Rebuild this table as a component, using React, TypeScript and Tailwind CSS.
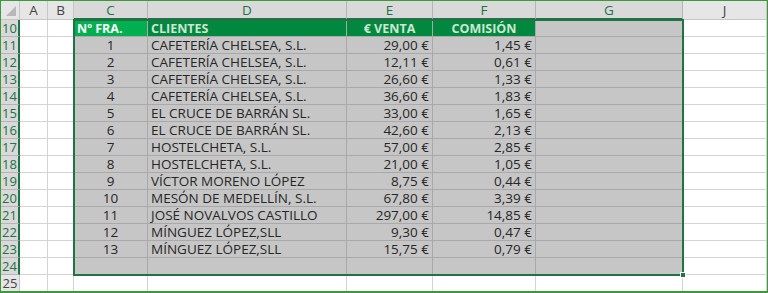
import { Fragment } from "react";

const COLS = ["A", "B", "C", "D", "E", "F", "G", "J"];
const SEL_COLS = ["C", "D", "E", "F", "G"];

const ROWS: [number, string, string, string][] = [
  [1, "CAFETERÍA CHELSEA, S.L.", "29,00 €", "1,45 €"],
  [2, "CAFETERÍA CHELSEA, S.L.", "12,11 €", "0,61 €"],
  [3, "CAFETERÍA CHELSEA, S.L.", "26,60 €", "1,33 €"],
  [4, "CAFETERÍA CHELSEA, S.L.", "36,60 €", "1,83 €"],
  [5, "EL CRUCE DE BARRÁN SL.", "33,00 €", "1,65 €"],
  [6, "EL CRUCE DE BARRÁN SL.", "42,60 €", "2,13 €"],
  [7, "HOSTELCHETA, S.L.", "57,00 €", "2,85 €"],
  [8, "HOSTELCHETA, S.L.", "21,00 €", "1,05 €"],
  [9, "VÍCTOR MORENO LÓPEZ", "8,75 €", "0,44 €"],
  [10, "MESÓN DE MEDELLÍN, S.L.", "67,80 €", "3,39 €"],
  [11, "JOSÉ NOVALVOS CASTILLO", "297,00 €", "14,85 €"],
  [12, "MÍNGUEZ LÓPEZ,SLL", "9,30 €", "0,47 €"],
  [13, "MÍNGUEZ LÓPEZ,SLL", "15,75 €", "0,79 €"],
];

const plain = "border-r border-b border-[#d4d4d4] bg-white";
const sel =
  "border-r border-b border-[#a9a9a9] bg-[#c6c6c6] text-[#262626] px-[3px] leading-[16px] whitespace-nowrap overflow-hidden";
const head =
  "border-r border-b border-[#a9a9a9] font-bold text-[12.5px] leading-[15px] pt-[1px] whitespace-nowrap";

function RowHead({ n, active }: { n: number; active: boolean }) {
  return (
    <div
      className={
        active
          ? "border-b border-[#b5b5b5] border-r-2 border-r-[#217346] bg-[#d9d9d9] text-[#217346] text-center text-[13px] leading-[16px]"
          : "border-b border-r border-[#c6c6c6] bg-[#e6e6e6] text-[#444] text-center text-[13px] leading-[16px]"
      }
    >
      {n}
    </div>
  );
}

export default function App() {
  return (
    <div
      className="relative w-[768px] h-[293px] border border-[#3c9a3c] border-b-2 overflow-hidden bg-white text-[13.5px]"
      style={{ fontFamily: '"Open Sans", "Noto Sans", sans-serif' }}
    >
      <div className="grid grid-cols-[19px_28px_26px_74px_199px_86px_103px_147px_84px] grid-rows-[19px_repeat(16,17px)]">
        {/* corner */}
        <div className="relative border-r border-b border-[#c6c6c6] bg-[#e6e6e6]">
          <svg className="absolute right-[3px] bottom-[3px]" width="10" height="10" viewBox="0 0 10 10">
            <path d="M10 0 L10 10 L0 10 Z" fill="#b8b8b8" />
          </svg>
        </div>
        {COLS.map((c) => {
          const on = SEL_COLS.includes(c);
          return (
            <div
              key={c}
              className={
                on
                  ? "border-r border-[#b5b5b5] border-b-2 border-b-[#217346] bg-[#d9d9d9] text-[#217346] text-center leading-[18px]"
                  : "border-r border-b border-[#c6c6c6] bg-[#e6e6e6] text-[#444] text-center leading-[18px]"
              }
            >
              {c}
            </div>
          );
        })}

        {/* row 10: headers */}
        <RowHead n={10} active />
        <div className={plain} />
        <div className={plain} />
        <div className={head + " bg-[#00b050] text-white px-[3px]"}>Nº FRA.</div>
        <div className={head + " bg-[#00883e] text-[#cfe6d4] px-[3px]"}>CLIENTES</div>
        <div className={head + " bg-[#00883e] text-[#cfe6d4] text-center"}>€ VENTA</div>
        <div className={head + " bg-[#00883e] text-[#cfe6d4] text-center"}>COMISIÓN</div>
        <div className={sel} />
        <div className={plain} />

        {ROWS.map(([n, name, venta, com], i) => (
          <Fragment key={n}>
            <RowHead n={11 + i} active />
            <div className={plain} />
            <div className={plain} />
            <div className={sel + " text-center"}>{n}</div>
            <div className={sel}>{name}</div>
            <div className={sel + " text-right"}>{venta}</div>
            <div className={sel + " text-right"}>{com}</div>
            <div className={sel} />
            <div className={plain} />
          </Fragment>
        ))}

        {/* row 24: empty selected */}
        <RowHead n={24} active />
        <div className={plain} />
        <div className={plain} />
        <div className={sel} />
        <div className={sel} />
        <div className={sel} />
        <div className={sel} />
        <div className={sel} />
        <div className={plain} />

        {/* row 25 */}
        <RowHead n={25} active={false} />
        {COLS.map((c) => (
          <div key={c} className={plain} />
        ))}
      </div>

      {/* selection outline */}
      <div className="pointer-events-none absolute left-[72px] top-[18px] w-[611px] h-[257px] border-2 border-[#217346]" />
      <div className="pointer-events-none absolute left-[679px] top-[271px] w-[6px] h-[6px] bg-[#217346] border border-white" />
    </div>
  );
}
